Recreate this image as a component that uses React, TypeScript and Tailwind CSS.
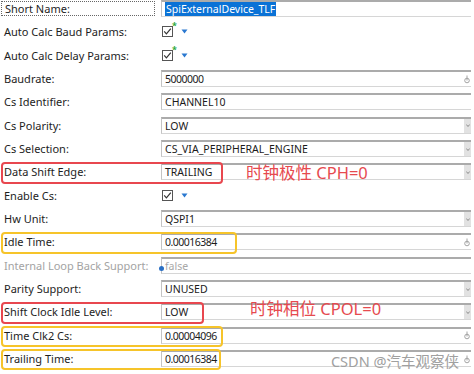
import React from "react";

type Kind = "text" | "select" | "check";

type Row = {
  label: string;
  kind: Kind;
  value?: string;
  star?: boolean;
  reset?: boolean;
  selected?: boolean;
  focus?: boolean;
  disabled?: boolean;
  mark?: string;
  note?: { text: string; cls: string };
};

// 高亮框的样式（红色 / 黄色）
const red = "border-[#e8474f]";
const yellow = "border-[#f6c42a]";

const rows: Row[] = [
  { label: "Short Name:", kind: "text", value: "SpiExternalDevice_TLF", selected: true, focus: true },
  { label: "Auto Calc Baud Params:", kind: "check", star: true },
  { label: "Auto Calc Delay Params:", kind: "check", star: true },
  { label: "Baudrate:", kind: "text", value: "5000000", reset: true },
  { label: "Cs Identifier:", kind: "text", value: "CHANNEL10" },
  { label: "Cs Polarity:", kind: "select", value: "LOW" },
  { label: "Cs Selection:", kind: "select", value: "CS_VIA_PERIPHERAL_ENGINE" },
  {
    label: "Data Shift Edge:",
    kind: "select",
    value: "TRAILING",
    mark: `${red} w-[222px]`,
    note: { text: "时钟极性 CPH=0", cls: "left-[246px] top-[5px]" },
  },
  { label: "Enable Cs:", kind: "check" },
  { label: "Hw Unit:", kind: "select", value: "QSPI1" },
  { label: "Idle Time:", kind: "text", value: "0.00016384", reset: true, mark: `${yellow} w-[236px]` },
  { label: "Internal Loop Back Support:", kind: "text", value: "false", disabled: true },
  { label: "Parity Support:", kind: "select", value: "UNUSED" },
  {
    label: "Shift Clock Idle Level:",
    kind: "select",
    value: "LOW",
    mark: `${red} w-[203px]`,
    note: { text: "时钟相位 CPOL=0", cls: "left-[250px] top-[1px]" },
  },
  { label: "Time Clk2 Cs:", kind: "text", value: "0.00004096", reset: true, mark: `${yellow} w-[222px]` },
  { label: "Trailing Time:", kind: "text", value: "0.00016384", reset: true, mark: `${yellow} w-[220px]` },
];

const CheckBox: React.FC<{ star?: boolean }> = ({ star }) => (
  <div className="flex items-center gap-[3px]">
    <div className="relative">
      <svg width="11" height="11" viewBox="0 0 11 11">
        <rect x="0.5" y="0.5" width="10" height="10" fill="white" stroke="#555" />
        <path d="M2.2 5.4 L4.4 7.8 L8.8 2.6" fill="none" stroke="#333" strokeWidth="1.2" />
      </svg>
      {star && (
        <span className="absolute -top-[5px] left-[10px] text-[9px] font-bold leading-none text-[#2fa83a]">
          *
        </span>
      )}
    </div>
    <svg width="7" height="5" viewBox="0 0 7 5" className="ml-[5px]">
      <path d="M0.5 0.5 L6.5 0.5 L3.5 4.5 Z" fill="#2a78d0" />
    </svg>
  </div>
);

const ResetIcon = () => (
  <svg width="6" height="9" viewBox="0 0 6 9" className="mr-[1px]">
    <circle cx="3" cy="5.5" r="2.3" fill="none" stroke="#9a9a9a" strokeWidth="0.9" />
    <path d="M3 0.5 V5.5" stroke="#9a9a9a" strokeWidth="0.9" />
  </svg>
);

const isNumber = (v?: string) => !!v && /^[0-9.]+$/.test(v);

const Field: React.FC<{ row: Row }> = ({ row }) => (
  <div className="flex h-[17px] flex-1 items-center border-l border-t-2 border-b border-l-[#c4c4c4] border-t-[#ababab] border-b-[#d6d6d6] bg-white text-[10.5px]">
    <div className={`flex-1 pl-[3px] ${isNumber(row.value) ? "tracking-[-0.5px]" : ""}`}>
      {row.selected ? (
        <span className="bg-[#0a72d6] px-[1px] text-white">{row.value}</span>
      ) : (
        <span className={row.disabled ? "text-[#a8a8a8]" : "text-[#1b1b1b]"}>{row.value}</span>
      )}
    </div>
    {row.reset && <ResetIcon />}
    {row.kind === "select" && (
      <div className="flex h-full w-[7px] items-center justify-center bg-[#e2e2e2]">
        <svg width="4" height="3" viewBox="0 0 4 3">
          <path d="M0.3 0.5 L2 2.5 L3.7 0.5" fill="none" stroke="#777" strokeWidth="0.8" />
        </svg>
      </div>
    )}
  </div>
);

const App: React.FC = () => {
  return (
    <div
      className="relative h-[374px] w-[474px] overflow-hidden bg-white text-[11px] leading-none"
      style={{ fontFamily: '"Noto Sans", "Noto Sans CJK SC", sans-serif' }}
    >
      <div className="-mt-[3px] flex flex-col pr-[3px]">
        {rows.map((row) => (
          <div key={row.label} className="relative flex h-[23.33px] items-center">
            <div className="w-[161px] pl-[1px]">
              <div
                className={`flex h-[15px] items-center pl-[3px] ${
                  row.focus ? "mr-[6px] border border-dotted border-[#666]" : ""
                } ${row.disabled ? "text-[#a3a3a3]" : "text-[#1d1d1d]"}`}
              >
                {row.label}
              </div>
            </div>
            {row.kind === "check" ? (
              <div className="flex flex-1 items-center pl-[1px]">
                <CheckBox star={row.star} />
              </div>
            ) : (
              <div className="relative flex flex-1">
                {row.disabled && (
                  <span className="absolute -left-[2px] top-[9px] h-[5px] w-[5px] rounded-full bg-[#2a6fc4]" />
                )}
                <Field row={row} />
              </div>
            )}
            {row.mark && (
              <div
                className={`pointer-events-none absolute left-[1px] top-[2px] bottom-0 rounded-[4px] border-[2.5px] ${row.mark}`}
              />
            )}
            {row.note && (
              <span
                className={`absolute ${row.note.cls} text-[16.5px] leading-none text-[#e64a4f]`}
              >
                {row.note.text}
              </span>
            )}
          </div>
        ))}
      </div>
      <span className="absolute bottom-[6px] right-[15px] text-[14.5px] leading-none text-[#a0a0a0]">
        CSDN @汽车观察侠
      </span>
    </div>
  );
};

export default App;
